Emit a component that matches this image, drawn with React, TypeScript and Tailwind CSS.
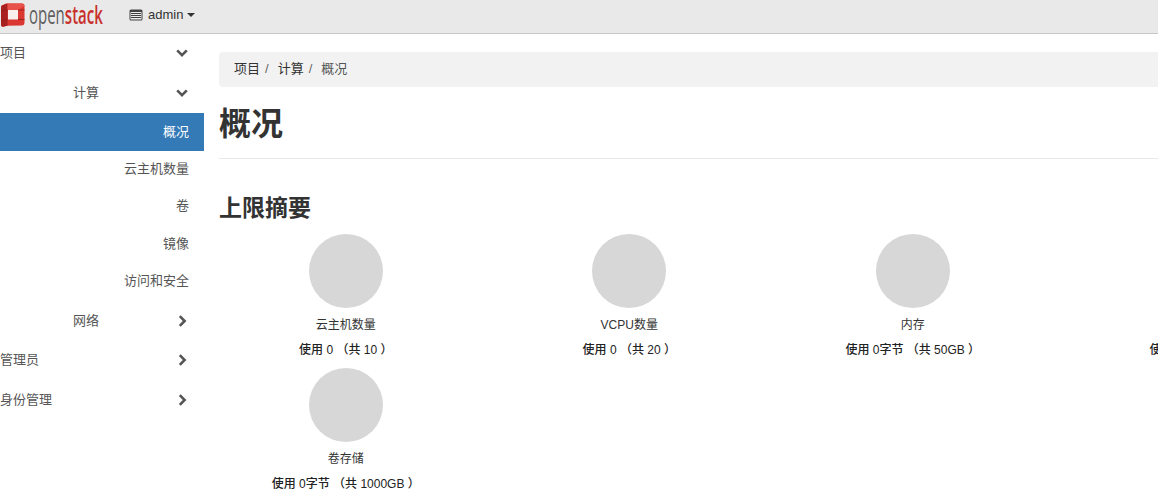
import React from "react";

const FONT = "font-['Helvetica_Neue','Liberation_Sans','Noto_Sans_CJK_SC',sans-serif]";

function Chevron({ dir }: { dir: "down" | "right" }) {
  return (
    <svg width="14" height="14" viewBox="0 0 14 14" className="shrink-0">
      {dir === "down" ? (
        <path d="M2.2 4.3 L7 9.1 L11.8 4.3" fill="none" stroke="#555" strokeWidth="2.6" />
      ) : (
        <path d="M4.8 2.2 L9.6 7 L4.8 11.8" fill="none" stroke="#555" strokeWidth="2.6" />
      )}
    </svg>
  );
}

function Logo() {
  return (
    <svg width="25" height="24" viewBox="0 0 25 24" className="shrink-0">
      <path d="M3 2 L6 0.6 L22 0.4 Q24.5 0.4 24.5 3 L24.5 20 Q24.5 22.4 22 22.4 L6 22.8 L3 23.8 Q1 23.8 1 21.8 L1 4 Q1 2.6 3 2 Z" fill="#d9372f" />
      <path d="M3 2 L7.5 0.6 L7.5 22.7 L3 23.8 Q1 23.8 1 21.8 L1 4 Q1 2.6 3 2 Z" fill="#a9211e" />
      <path d="M7.5 0.6 L22 0.4 Q24.5 0.4 24.5 3 L18 7 L7.5 7 Z" fill="#e8524a" />
      <rect x="8" y="7" width="10" height="9.5" fill="#f8efed" />
      <path d="M1 7.5 L8 7 M1 17.5 L8 16.5 M18 7 H24.5 M18 16.5 H24.5" stroke="#8f1f1c" strokeWidth="0.8" />
    </svg>
  );
}

function Row({ h, pl, text, chev }: { h: string; pl: string; text: string; chev: "down" | "right" }) {
  return (
    <div className={`flex items-center justify-between pr-[15px] ${h} ${pl}`}>
      <span>{text}</span>
      <Chevron dir={chev} />
    </div>
  );
}

function Sub({ text, active, h }: { text: string; active?: boolean; h: string }) {
  return (
    <div className={`flex items-center justify-end pr-[15px] ${h} ${active ? "bg-[#337ab7] text-white" : ""}`}>
      {text}
    </div>
  );
}

function Pie({ label, usage }: { label: string; usage: string }) {
  return (
    <div className="flex h-[134px] flex-col items-center">
      <div className="h-[74px] w-[74px] rounded-full bg-[#d7d7d7]" />
      <div className="mt-[9px] text-[12px] leading-[17px] text-[#333]">{label}</div>
      <div className="mt-[8px] text-[12px] leading-[17px] font-medium whitespace-pre text-[#222]">{usage}</div>
    </div>
  );
}

export default function App() {
  return (
    <div className={`h-[490px] w-[1158px] overflow-hidden bg-white ${FONT} text-[#333]`}>
      <header className="flex h-[34px] items-center border-b border-[#c8c8c8] bg-[#e9e9e9] pb-[4px]">
        <div className="flex w-[129px] items-center">
          <Logo />
          <span className="mb-[2px] ml-[4px] mr-[-60px] inline-block origin-left scale-x-[0.6] font-['Open_Sans'] text-[25px] leading-[24px] whitespace-nowrap text-[#5f5f5f]">
            open<span className="font-semibold text-[#c8302b]">stack</span>
          </span>
        </div>
        <div className="flex items-center text-[13px] text-[#333]">
          <svg width="14" height="12" viewBox="0 0 14 12" className="mr-[5px]">
            <rect x="0.5" y="0.5" width="13" height="11" rx="1.5" fill="#444" />
            <rect x="1.5" y="3" width="11" height="7.5" fill="#e9e9e9" />
            <path d="M2 4.5 H12 M2 6.5 H12 M2 8.5 H12" stroke="#444" strokeWidth="1" />
          </svg>
          <span>admin</span>
          <span className="ml-[4px] h-0 w-0 border-x-[4px] border-t-[4px] border-x-transparent border-t-[#333]" />
        </div>
      </header>
      <div className="flex">
        <aside className="w-[204px] shrink-0 text-[13px] text-[#555]">
          <Row h="h-[38px]" pl="pl-0" text="项目" chev="down" />
          <Row h="mt-[1px] h-[40px]" pl="pl-[73px]" text="计算" chev="down" />
          <Sub h="h-[38px]" text="概况" active />
          <Sub h="h-[36px]" text="云主机数量" />
          <Sub h="h-[38px]" text="卷" />
          <Sub h="h-[37px]" text="镜像" />
          <Sub h="h-[38px]" text="访问和安全" />
          <Row h="h-[41px]" pl="pl-[73px]" text="网络" chev="right" />
          <Row h="h-[38px]" pl="pl-0" text="管理员" chev="right" />
          <Row h="mt-[1px] h-[40px]" pl="pl-0" text="身份管理" chev="right" />
        </aside>
        <main className="w-[1134px] shrink-0">
          <div className="px-[15px] pt-[18px]">
            <div className="flex h-[35px] items-center rounded-[4px] bg-[#f2f2f2] pb-[2px] pl-[15px] text-[13px]">
              <span>项目</span>
              <span className="mr-[9px] ml-[5px] text-[#666]">/</span>
              <span>计算</span>
              <span className="mr-[9px] ml-[5px] text-[#666]">/</span>
              <span className="text-[#555]">概况</span>
            </div>
            <div className="flex h-[72px] items-center border-b border-[#e8e8e8] pt-[2px] text-[32px] font-bold text-[#333]">
              概况
            </div>
            <h2 className="mt-[32px] h-[43px] text-[23px] leading-[34px] font-bold text-[#333]">上限摘要</h2>
          </div>
          <div className="grid grid-cols-4">
            <Pie label="云主机数量" usage="使用 0 （共 10 ）" />
            <Pie label="VCPU数量" usage="使用 0 （共 20 ）" />
            <Pie label="内存" usage="使用 0字节 （共 50GB ）" />
            <Pie label="浮动IP" usage="使用 0 （共 50 ）" />
            <Pie label="卷存储" usage="使用 0字节 （共 1000GB ）" />
          </div>
        </main>
      </div>
    </div>
  );
}
